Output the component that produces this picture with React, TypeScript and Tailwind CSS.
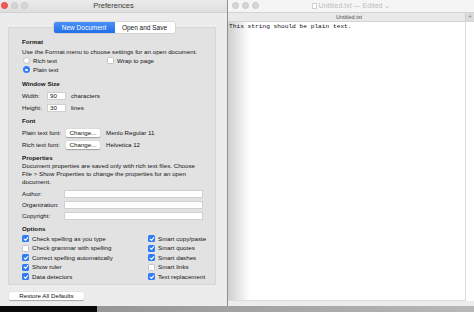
import React from "react";

const font = { fontFamily: '"Liberation Sans", Arial, sans-serif' };

const Check = ({ on }: { on: boolean }) =>
    on ? (
        <span className="w-[7px] h-[7px] rounded-[1.5px] bg-[#2f7cf6] flex items-center justify-center shrink-0">
            <svg width="6" height="6" viewBox="0 0 10 10">
                <path d="M2 5.2 L4.2 7.4 L8 2.6" fill="none" stroke="white" strokeWidth="1.8" strokeLinecap="round" strokeLinejoin="round" />
            </svg>
        </span>
    ) : (
        <span className="w-[7px] h-[7px] rounded-[1.5px] bg-white border border-[#c4c4c4] shrink-0" />
    );

const Radio = ({ on }: { on: boolean }) =>
    on ? (
        <span className="w-[7px] h-[7px] rounded-full bg-[#2f7cf6] flex items-center justify-center shrink-0">
            <span className="w-[2.5px] h-[2.5px] rounded-full bg-white" />
        </span>
    ) : (
        <span className="w-[7px] h-[7px] rounded-full bg-white border border-[#c4c4c4] shrink-0" />
    );

const Field = ({ className, value }: { className: string; value?: string }) => (
    <div className={`bg-white border border-[#d0d0d0] flex items-center pl-[2px] ${className}`}>{value}</div>
);

const Lights = ({ color }: { color: boolean }) => (
    <div className="flex items-center gap-[3px]">
        <span className={`w-[7px] h-[7px] rounded-full ${color ? "bg-[#fc5753] border border-[#df4744]" : "bg-[#d6d6d6] border border-[#c8c8c8]"}`} />
        <span className="w-[7px] h-[7px] rounded-full bg-[#d6d6d6] border border-[#c8c8c8]" />
        <span className="w-[7px] h-[7px] rounded-full bg-[#d6d6d6] border border-[#c8c8c8]" />
    </div>
);

const options: [string, boolean, string, boolean][] = [
    ["Check spelling as you type", true, "Smart copy/paste", true],
    ["Check grammar with spelling", false, "Smart quotes", true],
    ["Correct spelling automatically", true, "Smart dashes", true],
    ["Show ruler", true, "Smart links", false],
    ["Data detectors", true, "Text replacement", true],
];

const button = "h-[8px] bg-white rounded-[1.5px] shadow-[0_0.5px_1px_rgba(0,0,0,0.3)] flex items-center justify-center";

const Preferences = () => (
    <div className="absolute left-0 top-0 w-[227px] h-[306px] bg-[#ececec] flex flex-col text-[#141414] text-[6.2px] leading-[8px]" style={font}>
        <div className="h-[13px] relative flex items-center justify-center bg-gradient-to-b from-[#ebebeb] to-[#dedede] border-b border-[#d2d2d2] shrink-0">
            <div className="absolute left-[1px] top-[2px]">
                <Lights color />
            </div>
            <span className="text-[#3a3a3a] text-[7.5px]">Preferences</span>
        </div>
        <div className="flex flex-col px-[8px] pt-[9px]">
            <div className="flex justify-center relative z-10 pl-[1px]">
                <div className="flex h-[11px] rounded-[2px] shadow-[0_0_0_0.5px_#c4c4c4] overflow-hidden text-[6.5px]">
                    <div className="w-[61px] bg-gradient-to-b from-[#4a90f7] to-[#1f6fe8] text-white flex items-center justify-center">New Document</div>
                    <div className="w-[60px] bg-white flex items-center justify-center">Open and Save</div>
                </div>
            </div>
            <div className="-mt-[6px] w-[208px] bg-[#e2e2e2] border border-[#d6d6d6] rounded-[2px] pl-[13px] pt-[10px] pb-[2px] flex flex-col">
                <div className="h-[8px] flex items-center font-bold">Format</div>
                <div className="h-[8px] mt-[2px] flex items-center">Use the Format menu to choose settings for an open document.</div>
                <div className="h-[9px] flex items-center">
                    <div className="w-[85px] flex items-center gap-[3px] pl-[1px]"><Radio on={false} />Rich text</div>
                    <div className="flex items-center gap-[3px]"><Check on={false} />Wrap to page</div>
                </div>
                <div className="h-[9.5px] flex items-center gap-[3px] pl-[1px]"><Radio on />Plain text</div>
                <div className="h-[8px] mt-[5.5px] flex items-center font-bold">Window Size</div>
                <div className="h-[10px] mt-[2.5px] flex items-center">
                    <span className="w-[25px]">Width:</span>
                    <Field className="w-[19px] h-[8px]" value="90" />
                    <span className="ml-[5px]">characters</span>
                </div>
                <div className="h-[10px] mt-[2.5px] flex items-center">
                    <span className="w-[25px]">Height:</span>
                    <Field className="w-[19px] h-[8px]" value="30" />
                    <span className="ml-[5px]">lines</span>
                </div>
                <div className="h-[8px] mt-[4px] flex items-center font-bold">Font</div>
                <div className="h-[10px] mt-[3px] flex items-center">
                    <span className="w-[44px]">Plain text font:</span>
                    <div className={`w-[34px] ${button}`}>Change...</div>
                    <span className="ml-[6px]">Menlo Regular 11</span>
                </div>
                <div className="h-[10px] mt-[2px] flex items-center">
                    <span className="w-[44px]">Rich text font:</span>
                    <div className={`w-[34px] ${button}`}>Change...</div>
                    <span className="ml-[6px]">Helvetica 12</span>
                </div>
                <div className="h-[8px] mt-[4px] flex items-center font-bold">Properties</div>
                <div className="pr-[10px]">
                    Document properties are saved only with rich text files. Choose File &gt; Show Properties to change the properties for an open document.
                </div>
                <div className="h-[11px] mt-[2px] flex items-center">
                    <span className="w-[42px]">Author:</span>
                    <Field className="w-[139px] h-[8px]" />
                </div>
                <div className="h-[11px] flex items-center">
                    <span className="w-[42px]">Organization:</span>
                    <Field className="w-[139px] h-[8px]" />
                </div>
                <div className="h-[11px] flex items-center">
                    <span className="w-[42px]">Copyright:</span>
                    <Field className="w-[139px] h-[8px]" />
                </div>
                <div className="h-[8px] mt-[4px] flex items-center font-bold">Options</div>
                <div className="mt-[1px] flex flex-col">
                    {options.map(([a, ao, b, bo]) => (
                        <div key={a} className="h-[9.5px] flex items-center">
                            <div className="w-[126px] flex items-center gap-[3px]"><Check on={ao} />{a}</div>
                            <div className="flex items-center gap-[3px]"><Check on={bo} />{b}</div>
                        </div>
                    ))}
                </div>
            </div>
            <div className={`mt-[7px] ml-[1px] w-[75px] ${button}`}>Restore All Defaults</div>
        </div>
    </div>
);

const Editor = () => (
    <div className="absolute left-[227px] top-0 w-[247px] h-[306px] bg-[#f3f3f3] flex flex-col border-l border-[#8f8f8f]" style={font}>
        <div className="h-[12px] relative flex items-center justify-center bg-[#f5f5f5] shrink-0">
            <div className="absolute left-[4px] top-[2px]">
                <Lights color={false} />
            </div>
            <span className="text-[#bdbdbd] text-[7px] flex items-center gap-[2px]">
                <span className="w-[5px] h-[6px] border border-[#cfcfcf] bg-white" />
                Untitled.txt — Edited ⌄
            </span>
        </div>
        <div className="h-[10px] flex border-y border-[#d4d4d4] bg-[#e9e9e9] shrink-0">
            <div className="flex-1 flex items-center justify-center text-[5.5px] text-[#4a4a4a] pl-[5px]">Untitled.txt</div>
            <div className="w-[9px] border-l border-[#cfcfcf] bg-[#dcdcdc] flex items-center justify-center text-[#8a8a8a] text-[7px]">+</div>
        </div>
        <div className="flex-1 flex">
            <div className="flex-1 bg-white relative border-r border-[#dcdcdc] border-b">
                <div className="absolute left-0 top-0 bottom-0 w-[22px] bg-gradient-to-r from-[#cfcfcf] to-transparent" />
                <div className="relative pl-[1px] pt-[1px] text-[6.2px] leading-[8px] text-[#111]" style={{ fontFamily: '"Liberation Mono", monospace' }}>
                    This string should be plain text.
                </div>
            </div>
            <div className="w-[8px] bg-white" />
        </div>
        <div className="h-[5px] bg-[#ededed]" />
    </div>
);

export default function App() {
    return (
        <div className="relative w-[474px] h-[312px] overflow-hidden bg-gradient-to-r from-[#8c8c8c] to-[#b8b8b8]">
            <div className="absolute left-0 bottom-0 w-[97px] h-[6px] bg-[#0a0a0a]" />
            <Editor />
            <Preferences />
        </div>
    );
}
